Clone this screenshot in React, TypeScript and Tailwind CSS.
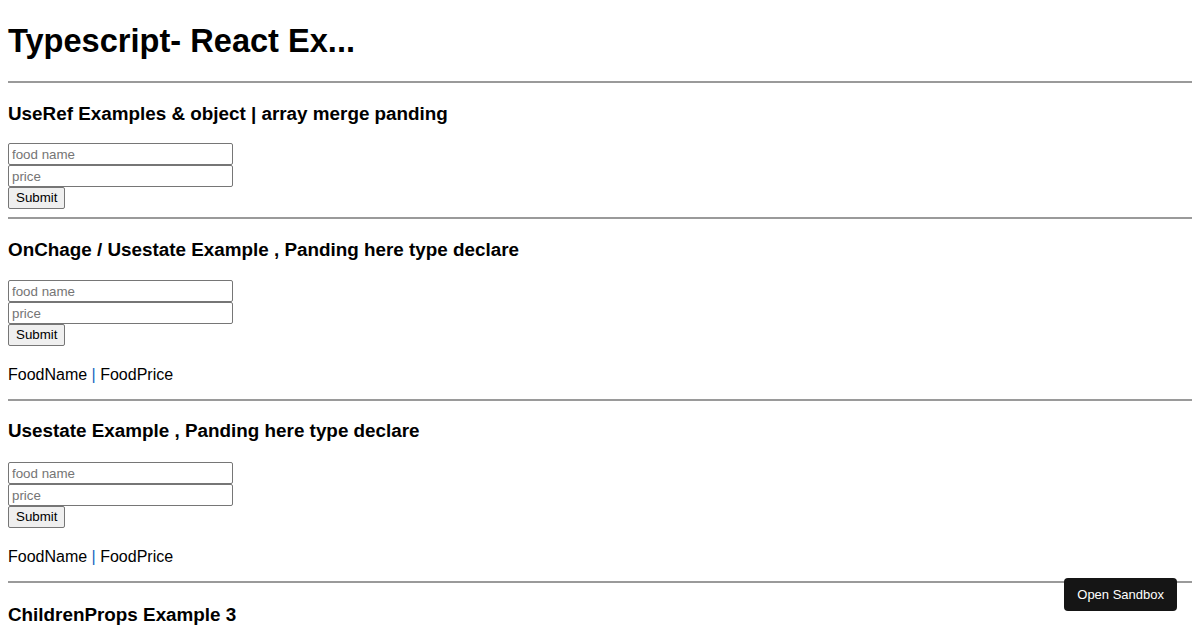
import React from "react";

const FoodForm: React.FunctionComponent = () => {
    return (
        <form className="flex flex-col items-start" onSubmit={(e) => e.preventDefault()}>
            <input
                className="w-[225px] h-[22px] border border-[#767676] rounded-[2px] px-[3px] text-[13.33px] text-black placeholder:text-[#757575] bg-white"
                type="text"
                placeholder="food name"
            />
            <input
                className="w-[225px] h-[22px] border border-[#767676] rounded-[2px] px-[3px] text-[13.33px] text-black placeholder:text-[#757575] bg-white"
                type="text"
                placeholder="price"
            />
            <button className="h-[22px] px-[7px] border border-[#767676] rounded-[2px] bg-[#efefef] text-[13.33px] text-black leading-none">
                Submit
            </button>
        </form>
    );
};

const Divider = () => <hr className="border-0 border-t-2 border-[#9a9a9a] my-0" />;

const App: React.FunctionComponent = () => {
    return (
        <div className="min-h-[630px] bg-white px-2 font-['Liberation_Sans',Arial,sans-serif] text-black">
            <h1 className="pt-[22px] pb-[22px] text-[32.6px] font-bold leading-[37px]">Typescript- React Ex...</h1>
            <Divider />

            <h3 className="mt-[20px] mb-[18px] text-[18.85px] font-bold leading-[22px]">
                UseRef Examples &amp; object | array merge panding
            </h3>
            <FoodForm />
            <div className="h-[8px]" />
            <Divider />

            <h3 className="mt-[20px] mb-[19px] text-[18.85px] font-bold leading-[22px]">
                OnChage / Usestate Example , Panding here type declare
            </h3>
            <FoodForm />
            <p className="mt-[20px] mb-[15px] text-[16px] leading-[18px]">
                FoodName <span className="text-[#1565c0]">|</span> FoodPrice
            </p>
            <Divider />

            <h3 className="mt-[19px] mb-[20px] text-[18.85px] font-bold leading-[22px]">
                Usestate Example , Panding here type declare
            </h3>
            <FoodForm />
            <p className="mt-[20px] mb-[15px] text-[16px] leading-[18px]">
                FoodName <span className="text-[#1565c0]">|</span> FoodPrice
            </p>
            <Divider />

            <h3 className="mt-[21px] mb-[19px] text-[18.85px] font-bold leading-[22px]">ChildrenProps Example 3</h3>

            <button className="fixed right-[23px] bottom-[19px] h-[33px] px-[13px] rounded-[4px] bg-[#151515] text-white text-[13px] font-['Liberation_Sans',Arial,sans-serif]">
                Open Sandbox
            </button>
        </div>
    );
};

export default App;
